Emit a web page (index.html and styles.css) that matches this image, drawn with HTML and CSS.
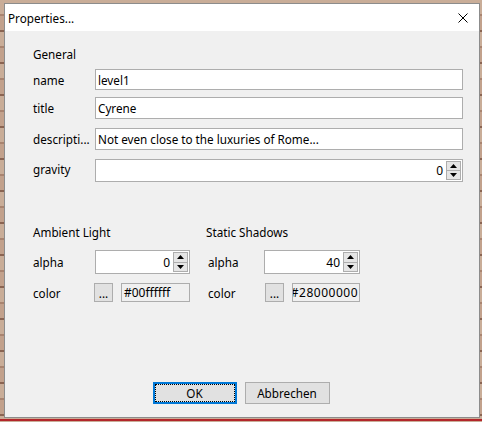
FILE: index.html
```html
<!DOCTYPE html>
<html>
<head>
<meta charset="utf-8">
<link rel="stylesheet" href="styles.css">
</head>
<body>
<div class="window">
  <div class="titlebar">
    <span class="title">Properties...</span>
    <svg class="close" viewBox="0 0 10 10"><path d="M0.5 0.5L9.5 9.5M9.5 0.5L0.5 9.5" stroke="#000" stroke-width="1" fill="none"/></svg>
  </div>
  <div class="dialog-body">
    <div class="content">
      <div class="section-title">General</div>
      <div class="row r-name"><span class="lbl">name</span><div class="field">level1</div></div>
      <div class="row r-title"><span class="lbl">title</span><div class="field">Cyrene</div></div>
      <div class="row r-desc"><span class="lbl">descripti...</span><div class="field">Not even close to the luxuries of Rome...</div></div>
      <div class="row r-gravity"><span class="lbl lbl-up">gravity</span>
        <div class="spin wide"><span class="val">0</span>
          <div class="arrows">
            <span class="arr"><svg width="7" height="4" viewBox="0 0 7 4"><path d="M3.5 0L7 4H0z"/></svg></span>
            <span class="arr"><svg width="7" height="4" viewBox="0 0 7 4"><path d="M0 0H7L3.5 4z"/></svg></span>
          </div>
        </div>
      </div>
      <div class="groups">
        <div class="group g1">
          <div class="group-title">Ambient Light</div>
          <div class="row r-alpha"><span class="lbl">alpha</span>
            <div class="spin"><span class="val">0</span>
              <div class="arrows">
                <span class="arr"><svg width="7" height="4" viewBox="0 0 7 4"><path d="M3.5 0L7 4H0z"/></svg></span>
                <span class="arr"><svg width="7" height="4" viewBox="0 0 7 4"><path d="M0 0H7L3.5 4z"/></svg></span>
              </div>
            </div>
          </div>
          <div class="row r-color"><span class="lbl">color</span>
            <div class="dots">...</div>
            <div class="hex"><span>#00ffffff</span></div>
          </div>
        </div>
        <div class="group g2">
          <div class="group-title">Static Shadows</div>
          <div class="row r-alpha"><span class="lbl">alpha</span>
            <div class="spin"><span class="val">40</span>
              <div class="arrows">
                <span class="arr"><svg width="7" height="4" viewBox="0 0 7 4"><path d="M3.5 0L7 4H0z"/></svg></span>
                <span class="arr"><svg width="7" height="4" viewBox="0 0 7 4"><path d="M0 0H7L3.5 4z"/></svg></span>
              </div>
            </div>
          </div>
          <div class="row r-color"><span class="lbl">color</span>
            <div class="dots">...</div>
            <div class="hex clipped"><span>#28000000</span></div>
          </div>
        </div>
      </div>
    </div>
    <div class="buttons">
      <button class="btn default"><span class="focus">OK</span></button>
      <button class="btn cancel">Abbrechen</button>
    </div>
  </div>
</div>
</body>
</html>
```
FILE: styles.css
```css
* { box-sizing: border-box; }
html, body { margin: 0; padding: 0; }
body {
  width: 482px;
  height: 422px;
  overflow: hidden;
  background-color: #c9ad98;
  background-image:
    linear-gradient(to bottom, transparent 419px, #b3262a 419px, #b3262a 421px, transparent 421px),
    repeating-linear-gradient(to bottom, #c9ad98 0 14px, #a98470 14px 16px, #c2a18c 16px 30px, #8a6452 30px 32px);
  font-family: "Noto Sans", "Segoe UI", sans-serif;
  font-size: 11.7px;
  color: #000;
}
.window {
  margin: 3px 0 0 4px;
  width: 476px;
  height: 415px;
  border: 1px solid #8c8c8c;
  background: #f0f0f0;
  display: flex;
  flex-direction: column;
}
.titlebar {
  flex: none;
  height: 27px;
  background: #fff;
  display: flex;
  align-items: center;
  justify-content: space-between;
  padding: 0 11px 0 3px;
}
.title { line-height: 16px; }
.close { width: 10px; height: 10px; display: block; }

.dialog-body { flex: 1; display: flex; flex-direction: column; }
.content { padding: 15px 16px 0 28px; }
.section-title, .group-title { line-height: 16px; height: 16px; white-space: nowrap; }

.row { display: flex; align-items: center; }
.lbl { width: 62px; flex: none; line-height: 16px; white-space: nowrap; }
.lbl-up { align-self: flex-start; margin-top: 2px; }
.field {
  flex: 1;
  height: 22px;
  border: 1px solid #adadad;
  background: #fff;
  padding: 0 2px;
  display: flex;
  align-items: center;
  white-space: nowrap;
  overflow: hidden;
}
.r-name { margin-top: 7px; }
.r-name .field { height: 21px; }
.r-title { margin-top: 7px; }
.r-desc { margin-top: 9px; }
.r-gravity { margin-top: 9px; }

.spin {
  flex: 1;
  height: 23px;
  border: 1px solid #adadad;
  background: #fff;
  display: flex;
  align-items: stretch;
  justify-content: flex-end;
  padding: 1px;
}
.spin .val { align-self: center; padding-right: 3px; font-size: 12px; }
.arrows { width: 15px; flex: none; display: flex; flex-direction: column; }
.arr {
  flex: 1;
  background: #e5e5e5;
  border: 1px solid #adadad;
  display: flex;
  align-items: center;
  justify-content: center;
}
.arr + .arr { border-top: none; }
.arr svg { display: block; fill: #000; }

.groups { display: flex; margin-top: 42px; }
.g1 { width: 157px; }
.g2 { width: 154px; margin-left: 16px; }
.g2 .lbl { width: 58px; padding-left: 2px; }
.r-alpha { margin-top: 10px; }
.r-alpha .spin { height: 24px; }
.r-color { margin-top: 9px; }
.dots {
  width: 19px;
  height: 19px;
  flex: none;
  background: #e1e1e1;
  border: 1px solid #adadad;
  display: flex;
  align-items: center;
  justify-content: center;
  line-height: 16px;
}
.g1 .dots { margin-left: -1px; }
.g2 .dots { margin-left: 1px; }
.hex {
  flex: 1;
  height: 19px;
  margin-left: 8px;
  background: #f0f0f0;
  border: 1px solid #adadad;
  padding: 0 2px;
  display: flex;
  align-items: center;
  overflow: hidden;
  white-space: nowrap;
  font-size: 12px;
}
.hex.clipped { justify-content: flex-end; padding-right: 1px; }
.hex.clipped span { letter-spacing: 0.5px; }
.hex span { flex: none; }

.buttons {
  margin-top: auto;
  padding-bottom: 13px;
  padding-right: 2px;
  display: flex;
  justify-content: center;
  gap: 8px;
}
.btn {
  height: 22px;
  width: 84px;
  font: inherit;
  color: #000;
  background: #e1e1e1;
  border: 1px solid #adadad;
  padding: 0;
  margin: 0;
  display: flex;
  align-items: center;
  justify-content: center;
}
.btn.cancel { width: 85px; }
.btn.default { border: 2px solid #0078d7; align-items: stretch; }
.focus {
  flex: 1;
  border: 1px dotted #000;
  display: flex;
  align-items: center;
  justify-content: center;
}
```
